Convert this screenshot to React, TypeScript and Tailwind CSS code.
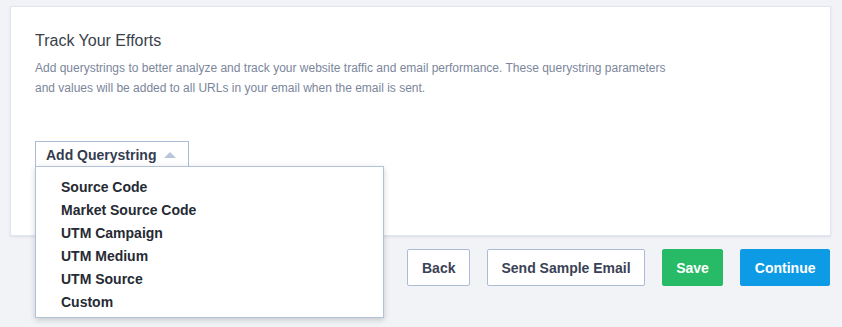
import React from 'react';

const options = ['Source Code', 'Market Source Code', 'UTM Campaign', 'UTM Medium', 'UTM Source', 'Custom'];

export default function App() {
  return (
    <div className="h-[327px] w-full overflow-hidden bg-[#f2f3f7] pl-[10px] pr-[11px] pt-[6px] font-['Liberation_Sans',Arial,sans-serif]">
      {/* Card */}
      <div className="h-[230px] border border-[#e0e5ee] bg-white px-6 pt-6 shadow-[0_1px_2px_rgba(60,80,120,0.12)]">
        <h2 className="text-[16px] leading-[20px] text-[#3a3f4b]">Track Your Efforts</h2>
        <p className="mt-[7px] max-w-[650px] text-[12px] leading-[20px] text-[#7b869b]">
          Add querystrings to better analyze and track your website traffic and email performance. These querystring parameters
          and values will be added to all URLs in your email when the email is sent.
        </p>

        <div className="relative mt-[43px] inline-block">
          <button className="flex h-[27px] items-center border border-[#acbbd6] bg-white pl-[10px] pr-[12px] pt-px text-[14px] font-bold text-[#343c50]">
            Add Querystring
            <svg className="ml-[8px]" width="12" height="6" viewBox="0 0 12 6">
              <path d="M0 6 L6 0 L12 6 Z" fill="#b8c5da" />
            </svg>
          </button>

          {/* Dropdown menu */}
          <div className="absolute left-0 top-[25px] z-10 w-[349px] border border-[#b3c2db] bg-white pb-[3px] pt-[9px] shadow-[0_2px_6px_rgba(0,0,0,0.18)]">
            {options.map((o) => (
              <div key={o} className="pl-[25px] text-[14px] font-bold leading-[23px] text-[#262a33]">
                {o}
              </div>
            ))}
          </div>
        </div>
      </div>

      {/* Actions */}
      <div className="mt-[13px] flex justify-end gap-[17px] pr-[1px]">
        <button className="h-[37px] rounded-[2px] border border-[#adbbd6] bg-white px-[14px] pt-[2px] text-[14px] font-bold text-[#3b4256]">
          Back
        </button>
        <button className="h-[37px] rounded-[2px] border border-[#adbbd6] bg-white px-[13px] pt-[2px] text-[14px] font-bold text-[#3b4256]">
          Send Sample Email
        </button>
        <button className="h-[37px] rounded-[2px] border border-[#27bb67] bg-[#27bb67] px-[13.5px] pt-[2px] text-[14px] font-bold text-white">
          Save
        </button>
        <button className="h-[37px] rounded-[2px] border border-[#0e9be6] bg-[#0e9be6] px-[13.5px] pt-[2px] text-[14px] font-bold text-white">
          Continue
        </button>
      </div>
    </div>
  );
}
